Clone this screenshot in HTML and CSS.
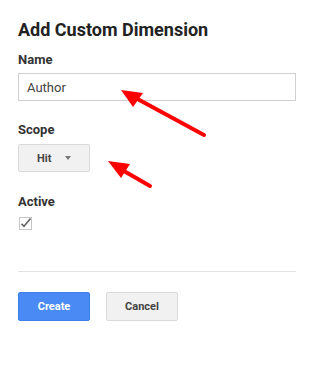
FILE: index.html
```html
<!DOCTYPE html>
<html lang="en">
<head>
    <meta charset="UTF-8">
    <title>Add Custom Dimension</title>
    <link rel="stylesheet" href="styles.css">
</head>
<body>
    <div class="panel">
        <h1 class="title">Add Custom Dimension</h1>

        <div class="field">
            <label class="label" for="dimName">Name</label>
            <input class="text-input" id="dimName" type="text" value="Author">
        </div>

        <div class="field field-scope">
            <div class="label">Scope</div>
            <button class="select-btn" type="button">
                <span>Hit</span>
                <span class="caret"></span>
            </button>
        </div>

        <div class="field field-active">
            <div class="label">Active</div>
            <span class="checkbox">
                <svg width="13" height="13" viewBox="0 0 13 13">
                    <path d="M2.5 6.8 L5 9.3 L11.5 1.5" fill="none" stroke="#666" stroke-width="1.7"/>
                </svg>
            </span>
        </div>

        <hr class="divider">

        <div class="actions">
            <button class="btn btn-primary" type="button">Create</button>
            <button class="btn btn-default" type="button">Cancel</button>
        </div>
    </div>

    <!-- annotation arrows drawn over the form -->
    <svg class="arrows" width="331" height="366" viewBox="0 0 331 366">
        <line x1="204" y1="135" x2="132" y2="96" stroke="#f00" stroke-width="4" stroke-linecap="round"/>
        <polygon points="121,90 143,93 133,107" fill="#f00"/>
        <line x1="150" y1="186" x2="117" y2="167" stroke="#f00" stroke-width="4" stroke-linecap="round"/>
        <polygon points="108,161 130,164 121,178" fill="#f00"/>
    </svg>
</body>
</html>
```

FILE: styles.css
```css
body {
    margin: 0;
    font-family: Roboto, "Liberation Sans", Arial, sans-serif;
    background: #fff;
    color: #333;
}

.panel {
    width: 278px;
    padding: 18px 0 0 18px;
    display: flex;
    flex-direction: column;
}

.title {
    margin: 0;
    font-size: 18px;
    line-height: 24px;
    font-weight: 700;
    color: #222;
}

.field {
    display: flex;
    flex-direction: column;
    align-items: flex-start;
    margin-top: 10px;
}

.label {
    font-size: 13px;
    line-height: 16px;
    font-weight: 700;
    color: #333;
    margin-bottom: 5px;
}

.text-input {
    box-sizing: border-box;
    width: 278px;
    height: 28px;
    margin: 0;
    padding: 0 8px;
    border: 1px solid #d0d0d0;
    font-family: inherit;
    font-size: 13px;
    color: #444;
    outline: none;
}

.field-scope {
    margin-top: 21px;
}

.field-scope .label {
    margin-bottom: 6px;
}

.select-btn {
    box-sizing: border-box;
    width: 72px;
    height: 28px;
    padding: 0 18px;
    display: flex;
    align-items: center;
    justify-content: space-between;
    background: #f1f1f1;
    border: 1px solid #dadada;
    border-radius: 2px;
    font-family: inherit;
    font-size: 11px;
    font-weight: 700;
    color: #444;
}

.caret {
    width: 0;
    height: 0;
    border-left: 3.5px solid transparent;
    border-right: 3.5px solid transparent;
    border-top: 4px solid #777;
}

.field-active {
    margin-top: 22px;
}

.field-active .label {
    margin-bottom: 7px;
}

.checkbox {
    box-sizing: border-box;
    width: 13px;
    height: 13px;
    margin-left: 1px;
    border: 1px solid #c6c6c6;
    display: flex;
    align-items: center;
    justify-content: center;
}

.checkbox svg {
    flex-shrink: 0;
}

.divider {
    width: 278px;
    margin: 41px 0 0 0;
    border: none;
    border-top: 1px solid #e3e3e3;
}

.actions {
    display: flex;
    gap: 16px;
    margin-top: 20px;
}

.btn {
    box-sizing: border-box;
    width: 72px;
    height: 29px;
    border-radius: 2px;
    font-family: inherit;
    font-size: 11px;
    font-weight: 700;
}

.btn-primary {
    background: #4a8af4;
    border: 1px solid #3f7fe8;
    color: #fff;
}

.btn-default {
    background: #f1f1f1;
    border: 1px solid #dadada;
    color: #444;
}

.arrows {
    position: absolute;
    left: 0;
    top: 0;
    pointer-events: none;
}
```
